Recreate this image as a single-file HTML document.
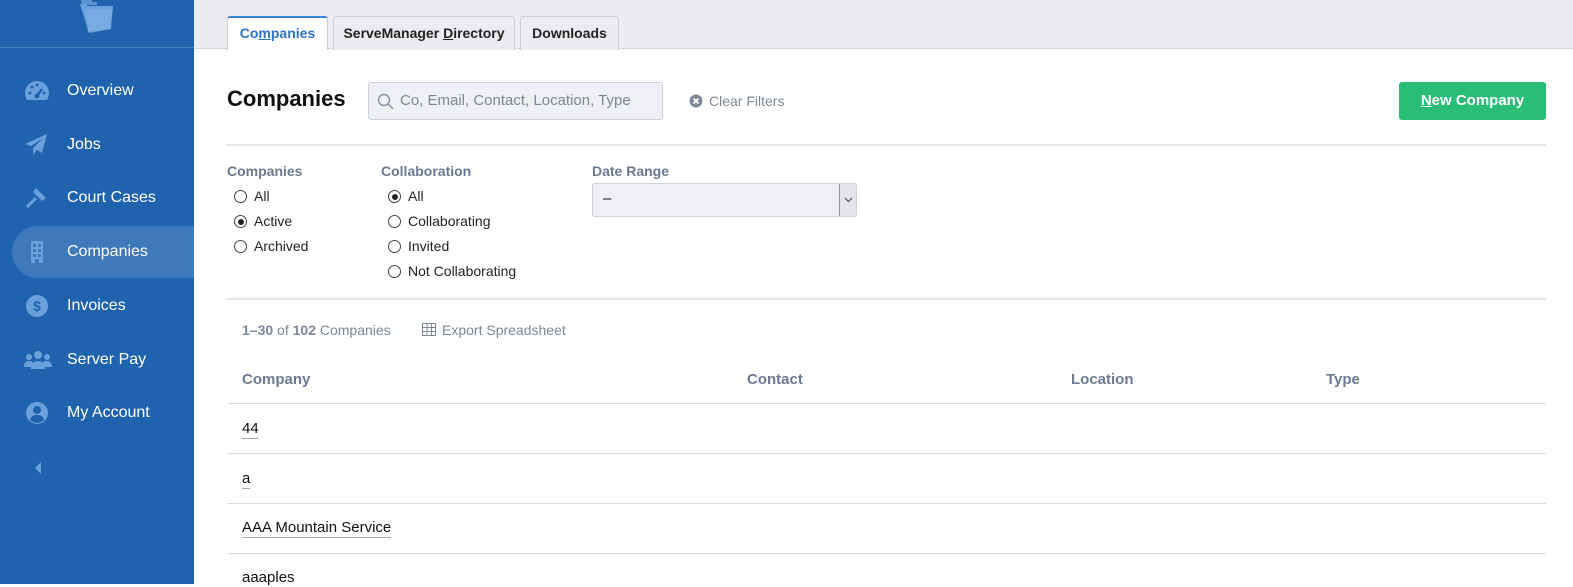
<!DOCTYPE html>
<html><head><meta charset="utf-8"><style>
*{box-sizing:border-box;margin:0;padding:0}
body{width:1573px;height:584px;overflow:hidden;background:#fff;font-family:"Liberation Sans",Arial,sans-serif;position:relative}
.side{position:absolute;left:0;top:0;width:194px;height:584px;background:#1f62ad}
.side .hl{position:absolute;left:0;top:47px;width:194px;height:1px;background:#4c82c0}
.nav{position:absolute;left:0;width:194px;height:52px;color:#fff;font-size:16px}
.nav span{position:absolute;left:67px;top:50%;transform:translateY(-50%)}
.nav svg{position:absolute;left:24px;top:50%;transform:translateY(-50%)}
.sel{background:#3d79bb;left:12px;width:182px;border-radius:26px 0 0 26px}
.sel span{left:55px}.sel svg{left:12px}
.top{position:absolute;left:194px;top:0;right:0;height:49px;background:#ebecf0;border-bottom:1px solid #cfd3da}
.tab{position:absolute;top:16px;height:34px;border:1px solid #c9ccd3;border-bottom:none;border-radius:3px 3px 0 0;font-size:14px;font-weight:bold;color:#222;text-align:center;line-height:32px;background:#ebecf0}
.tab.a{background:#fff;color:#2f74c5;border-top:2px solid #3a84d6;height:34px;line-height:30px}
.lbl{position:absolute;font-size:14px;color:#6b7a90;font-weight:bold}
.r{position:absolute;font-size:14px;color:#222}
.r i{position:absolute;left:-20px;top:2px;width:13px;height:13px;border:1px solid #444;border-radius:50%}
.r i.on::after{content:"";position:absolute;left:2.5px;top:2.5px;width:6px;height:6px;border-radius:50%;background:#222}
.hr{position:absolute;left:227px;width:1319px;height:2px;background:#e6e7eb}
.th{position:absolute;top:371px;font-size:15px;font-weight:bold;color:#6b7a90}
.row{position:absolute;left:227px;width:1319px;height:1px;background:#d8dbe0}
.cell{position:absolute;left:242px;font-size:15px;color:#111;border-bottom:1px solid #aaa;line-height:18px}
</style></head><body>
<div class="side">
<svg style="position:absolute;left:78px;top:0" width="38" height="33" viewBox="0 0 38 33"><path d="M3 0h10l2 2h4v3H4z" fill="#5b93d3"/><path d="M2 4h6l1 2h26l-2 23-22 4z" fill="#6aa0dc"/><path d="M7 9h27l-2 20-22 3z" fill="#79aae2"/></svg>
<div class="hl"></div>
<div class="nav" style="top:65px"><svg width="26" height="22" viewBox="0 0 26 22"><path d="M13 1A12 12 0 0 0 1 13c0 3 1 5 2 7h20c1-2 2-4 2-7A12 12 0 0 0 13 1z" fill="#6aa0dc"/><circle cx="13" cy="16" r="2.5" fill="#1f62ad"/><path d="M13 16l5-7" stroke="#1f62ad" stroke-width="2.5"/><circle cx="6" cy="13" r="1.5" fill="#1f62ad"/><circle cx="8" cy="7" r="1.5" fill="#1f62ad"/><circle cx="13" cy="5" r="1.5" fill="#1f62ad"/><circle cx="20" cy="13" r="1.5" fill="#1f62ad"/></svg><span>Overview</span></div>
<div class="nav" style="top:119px"><svg width="24" height="22" viewBox="0 0 24 22"><path d="M23 0L1 10l6 2 12-8-10 10v7l4-5 5 3z" fill="#6aa0dc"/></svg><span>Jobs</span></div>
<div class="nav" style="top:172px"><svg width="24" height="24" viewBox="0 0 24 24"><path d="M12 2l10 10-4 3-9-9z" fill="#6aa0dc"/><path d="M11 11l-9 9 2 2 9-9z" fill="#6aa0dc"/></svg><span>Court Cases</span></div>
<div class="nav sel" style="top:226px"><svg width="26" height="24" viewBox="0 0 26 24"><rect x="7" y="1" width="12" height="22" fill="#6aa0dc"/><g fill="#3d79bb"><rect x="9" y="4" width="3" height="3"/><rect x="14" y="4" width="3" height="3"/><rect x="9" y="9" width="3" height="3"/><rect x="14" y="9" width="3" height="3"/><rect x="9" y="14" width="3" height="3"/><rect x="14" y="14" width="3" height="3"/><rect x="11" y="19" width="4" height="4"/></g></svg><span>Companies</span></div>
<div class="nav" style="top:280px"><svg width="26" height="24" viewBox="0 0 26 24"><circle cx="13" cy="12" r="11" fill="#6aa0dc"/><text x="13" y="17" font-size="14" font-weight="bold" text-anchor="middle" fill="#1f62ad" font-family="Liberation Sans">$</text></svg><span>Invoices</span></div>
<div class="nav" style="top:334px"><svg width="28" height="22" viewBox="0 0 28 22"><circle cx="14" cy="6" r="4" fill="#6aa0dc"/><circle cx="5" cy="8" r="3" fill="#6aa0dc"/><circle cx="23" cy="8" r="3" fill="#6aa0dc"/><path d="M7 20c0-5 3-8 7-8s7 3 7 8z" fill="#6aa0dc"/><path d="M0 18c0-4 2-6 5-6s4 1 4 2v4zM28 18c0-4-2-6-5-6s-4 1-4 2v4z" fill="#6aa0dc"/></svg><span>Server Pay</span></div>
<div class="nav" style="top:387px"><svg width="26" height="24" viewBox="0 0 26 24"><circle cx="13" cy="12" r="11" fill="#6aa0dc"/><circle cx="13" cy="9" r="4" fill="#1f62ad"/><path d="M6 19c1-4 4-5 7-5s6 1 7 5a10 10 0 0 1-14 0z" fill="#1f62ad"/></svg><span>My Account</span></div>
<svg style="position:absolute;left:34px;top:462px" width="8" height="12" viewBox="0 0 8 12"><path d="M7 0L1 6l6 6z" fill="#6aa0dc"/></svg>
</div>
<div class="top"></div>
<div class="tab a" style="left:227px;width:101px">Co<u>m</u>panies</div>
<div class="tab" style="left:333px;width:182px">ServeManager <u>D</u>irectory</div>
<div class="tab" style="left:520px;width:99px">Downloads</div>

<div style="position:absolute;left:227px;top:86px;font-size:22px;font-weight:bold;color:#111">Companies</div>
<div style="position:absolute;left:368px;top:82px;width:295px;height:38px;background:#eef0f4;border:1px solid #cdd1d8;border-radius:3px">
<svg style="position:absolute;left:8px;top:10px" width="17" height="17" viewBox="0 0 17 17"><circle cx="7" cy="7" r="5.5" fill="none" stroke="#8a93a3" stroke-width="1.5"/><path d="M11 11l5 5" stroke="#8a93a3" stroke-width="1.5"/></svg>
<span style="position:absolute;left:31px;top:9px;font-size:15px;color:#7d8796">Co, Email, Contact, Location, Type</span></div>
<svg style="position:absolute;left:689px;top:94px" width="14" height="14" viewBox="0 0 14 14"><circle cx="7" cy="7" r="6.5" fill="#7d8796"/><path d="M4.5 4.5l5 5M9.5 4.5l-5 5" stroke="#fff" stroke-width="1.8"/></svg>
<span style="position:absolute;left:709px;top:93px;font-size:14px;color:#7d8796">Clear Filters</span>
<div style="position:absolute;left:1399px;top:82px;width:147px;height:38px;background:#2abd76;border-radius:3px;color:#fff;font-size:15px;font-weight:bold;text-align:center;line-height:38px"><u>N</u>ew Company</div>
<div class="hr" style="top:144px"></div>

<div class="lbl" style="left:227px;top:163px">Companies</div>
<div class="r" style="left:254px;top:188px"><i></i>All</div>
<div class="r" style="left:254px;top:213px"><i class="on"></i>Active</div>
<div class="r" style="left:254px;top:238px"><i></i>Archived</div>
<div class="lbl" style="left:381px;top:163px">Collaboration</div>
<div class="r" style="left:408px;top:188px"><i class="on"></i>All</div>
<div class="r" style="left:408px;top:213px"><i></i>Collaborating</div>
<div class="r" style="left:408px;top:238px"><i></i>Invited</div>
<div class="r" style="left:408px;top:263px"><i></i>Not Collaborating</div>
<div class="lbl" style="left:592px;top:163px">Date Range</div>
<div style="position:absolute;left:592px;top:183px;width:265px;height:34px;background:#eef0f4;border:1px solid #cdd1d8;border-radius:3px">
<span style="position:absolute;left:10px;top:6px;font-size:15px;color:#111">–</span>
<div style="position:absolute;right:0;top:0;width:17px;height:32px;background:#e2e4e8;border-left:1px solid #999"><svg style="position:absolute;left:4px;top:13px" width="9" height="6" viewBox="0 0 9 6"><path d="M1 1l3.5 3.5L8 1" fill="none" stroke="#444"/></svg></div></div>
<div class="hr" style="top:298px"></div>

<div style="position:absolute;left:242px;top:322px;font-size:14px;color:#7d8796"><b>1–30</b> of <b>102</b> Companies</div>
<svg style="position:absolute;left:422px;top:323px" width="14" height="13" viewBox="0 0 14 13"><rect x="0.5" y="0.5" width="13" height="12" fill="none" stroke="#7d8796"/><path d="M0 4.5h14M0 8.5h14M5 0v13M9.5 0v13" stroke="#7d8796"/></svg>
<span style="position:absolute;left:442px;top:322px;font-size:14px;color:#7d8796">Export Spreadsheet</span>

<div class="th" style="left:242px">Company</div>
<div class="th" style="left:747px">Contact</div>
<div class="th" style="left:1071px">Location</div>
<div class="th" style="left:1326px">Type</div>
<div class="row" style="top:403px"></div>
<div class="cell" style="top:420px">44</div>
<div class="row" style="top:453px"></div>
<div class="cell" style="top:470px">a</div>
<div class="row" style="top:503px"></div>
<div class="cell" style="top:519px">AAA Mountain Service</div>
<div class="row" style="top:553px"></div>
<div class="cell" style="top:569px;border:none">aaaples</div>
</body></html>
